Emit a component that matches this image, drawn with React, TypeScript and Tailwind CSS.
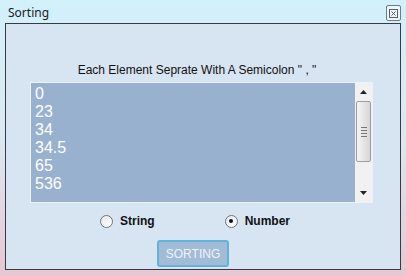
import { useState } from "react";

const values = ["0", "23", "34", "34.5", "65", "536"];

const Radio = ({ checked, label, onClick }: { checked: boolean; label: string; onClick: () => void }) => (
  <button onClick={onClick} className="flex items-center gap-[7px]">
    <span className="w-[13px] h-[13px] rounded-full border border-[#6f747a] bg-gradient-to-br from-[#e6e9ec] to-white flex items-center justify-center">
      {checked && <span className="w-[4px] h-[4px] rounded-full bg-[#111]" />}
    </span>
    <span className="text-[12px] font-bold text-[#111]">{label}</span>
  </button>
);

const App = () => {
  const [mode, setMode] = useState("number");

  return (
    <div
      className="w-[406px] h-[276px] flex flex-col bg-gradient-to-b from-[#d2f1fb] via-[#dbe8f0] to-[#e8c6d2]"
      style={{ fontFamily: '"Liberation Sans", Arial, sans-serif' }}
    >
      <div className="h-[23px] flex items-center justify-between pl-[8px] pr-[5px]">
        <span className="text-[12px] text-[#1b1b1b] pt-[2px]" style={{ fontFamily: '"Noto Sans", sans-serif' }}>
          Sorting
        </span>
        <span className="w-[15px] h-[16px] mt-[3px] rounded-[2px] border border-[#6e7c88] bg-[#eef6f9] flex items-center justify-center">
          <svg width="9" height="9" viewBox="0 0 9 9">
            <rect x="0.5" y="0.5" width="8" height="8" fill="none" stroke="#55606a" />
            <path d="M2.5 2.5 L6.5 6.5 M6.5 2.5 L2.5 6.5" stroke="#55606a" strokeWidth="1" />
          </svg>
        </span>
      </div>

      <div className="mx-[5px] h-[247px] border border-[#3a3a46] bg-[#d7e4f1] flex flex-col">
        <p className="mt-[39px] text-center text-[12px] text-[#111] pr-[12px] leading-[14px]">
          Each Element Seprate With A Semicolon " , "
        </p>

        <div className="mt-[5px] ml-[24px] w-[343px] h-[121px] border border-[#eef2f7] flex">
          <div className="flex-1 bg-[#97b1cf] pl-[4px] pt-[2px] text-[16px] leading-[18px] text-white">
            {values.map((v) => (
              <div key={v}>{v}</div>
            ))}
          </div>
          <div className="w-[17px] bg-[#f1f1f1] flex flex-col items-center">
            <div className="h-[18px] flex items-center justify-center">
              <svg width="7" height="4" viewBox="0 0 7 4">
                <path d="M0 4 L3.5 0 L7 4 Z" fill="#222" />
              </svg>
            </div>
            <div className="w-[15px] h-[61px] rounded-[2px] border border-[#9a9ea3] bg-gradient-to-r from-[#f4f4f4] via-[#e6e6e6] to-[#d6d6d6] flex flex-col items-center justify-center gap-[2px]">
              <span className="w-[6px] h-px bg-[#777]" />
              <span className="w-[6px] h-px bg-[#777]" />
              <span className="w-[6px] h-px bg-[#777]" />
              <span className="w-[6px] h-px bg-[#777]" />
            </div>
            <div className="flex-1" />
            <div className="h-[18px] flex items-center justify-center">
              <svg width="7" height="4" viewBox="0 0 7 4">
                <path d="M0 0 L3.5 4 L7 0 Z" fill="#222" />
              </svg>
            </div>
          </div>
        </div>

        <div className="mt-[9px] flex pl-[94px] gap-[70px]">
          <Radio checked={mode === "string"} label="String" onClick={() => setMode("string")} />
          <Radio checked={mode === "number"} label="Number" onClick={() => setMode("number")} />
        </div>

        <div className="mt-[10px] flex pl-[151px]">
          <button className="w-[72px] h-[27px] rounded-[3px] border-2 border-[#62b3dc] bg-[#a2bbd6] text-[12px] text-[#eef4fa]">
            SORTING
          </button>
        </div>
      </div>
    </div>
  );
};

export default App;
